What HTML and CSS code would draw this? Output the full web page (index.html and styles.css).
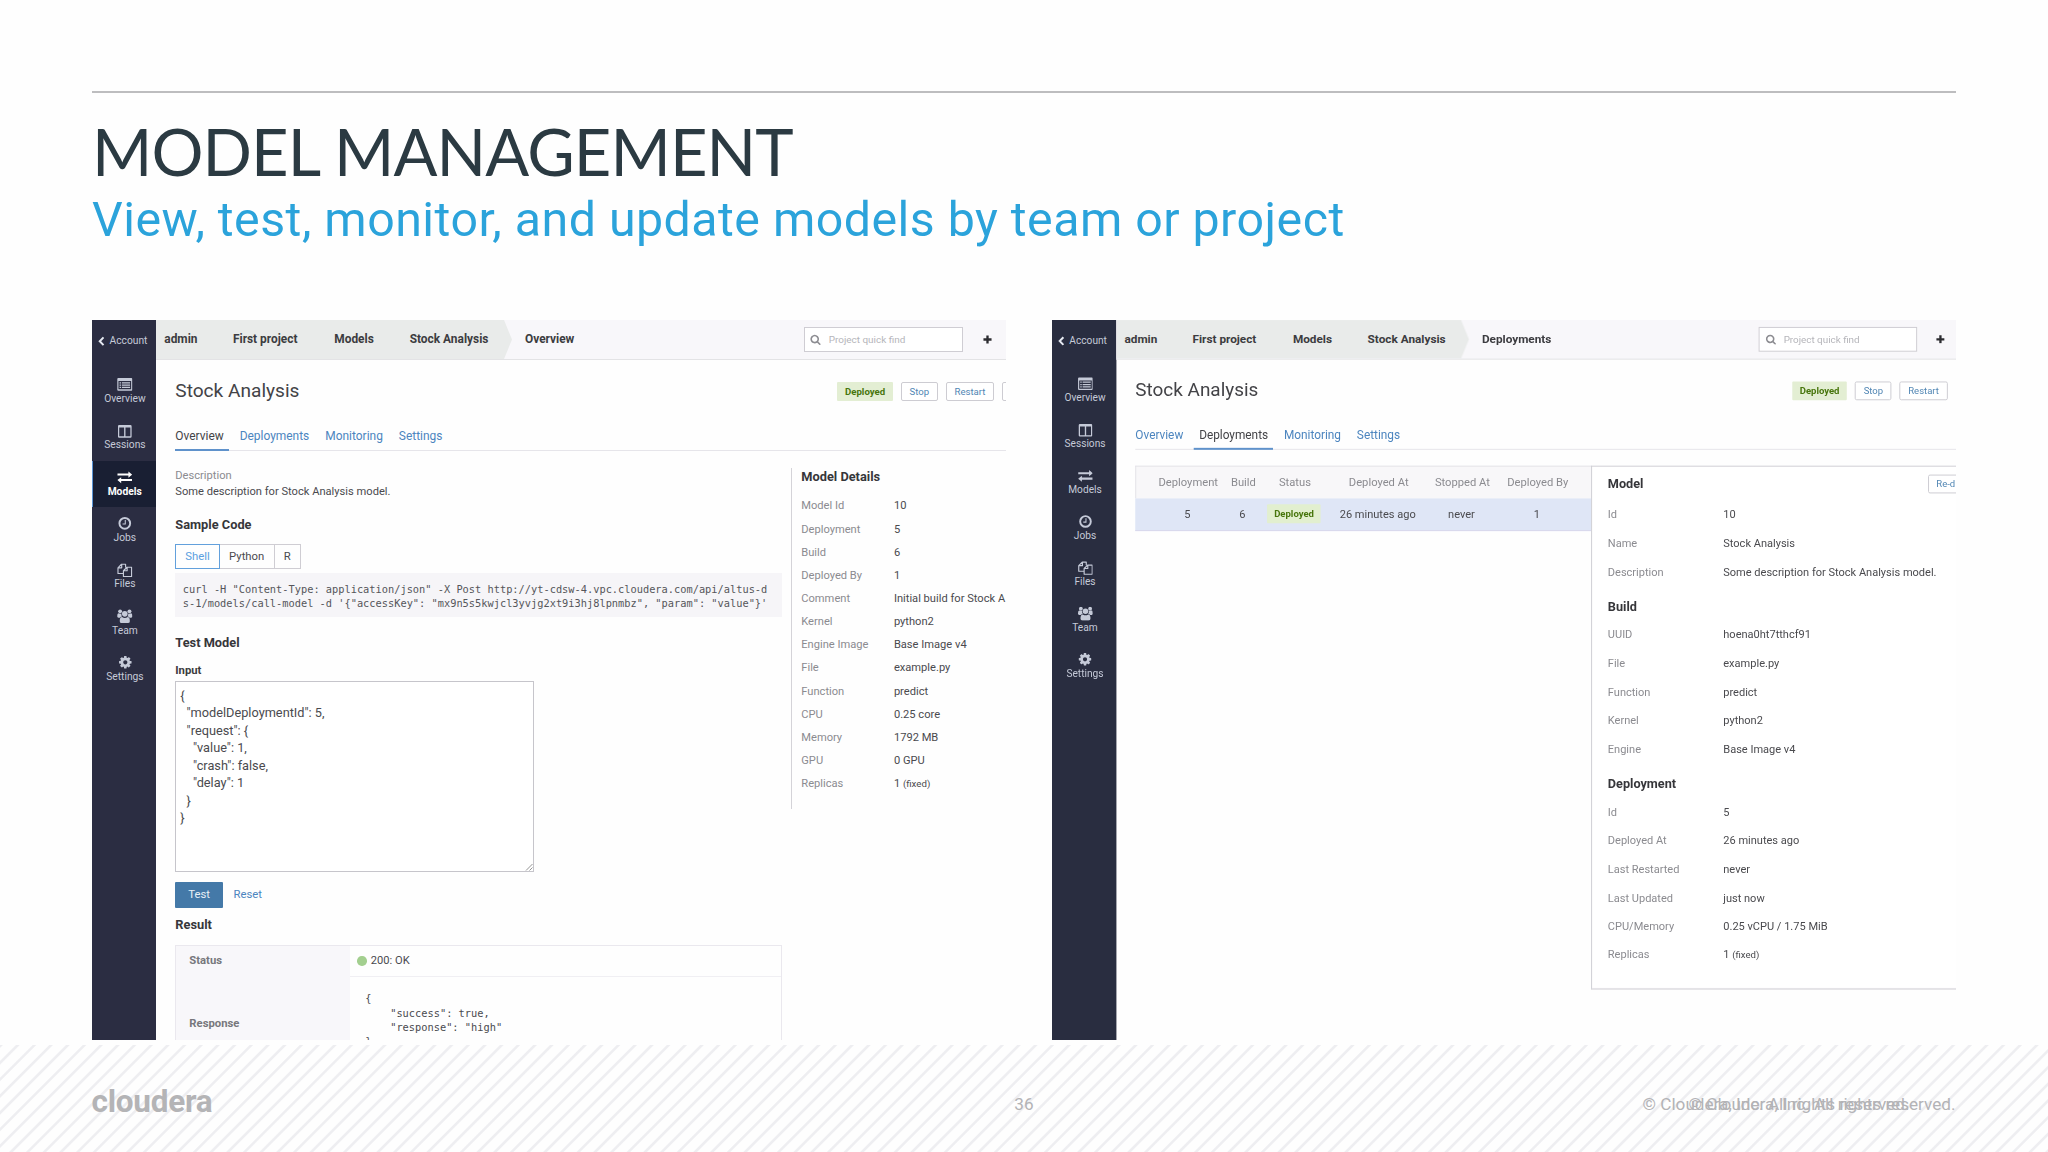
FILE: index.html
```html
<!DOCTYPE html>
<html lang="en">
<head>
<meta charset="utf-8">
<title>Model Management</title>
<link rel="stylesheet" href="styles.css">
</head>
<body>
<svg class="sprite" width="0" height="0" aria-hidden="true">
  <symbol id="i-back" viewBox="0 0 8 11"><path d="M6.3 1.1 2 5.5l4.3 4.4" fill="none" stroke="currentColor" stroke-width="2.3"/></symbol>
  <symbol id="i-overview" viewBox="0 0 16 14"><path fill-rule="evenodd" fill="currentColor" d="M1.3.5h13.4q1 0 1 1v11q0 1-1 1H1.3q-1 0-1-1v-11q0-1 1-1zM1.5 3.7v8.5h13V3.7z"/><path fill="currentColor" d="M2.6 4.8h1.5v1.3H2.6zM5 4.8h8.4v1.3H5zM2.6 7.2h1.5v1.3H2.6zM5 7.2h8.4v1.3H5zM2.6 9.6h1.5v1.3H2.6zM5 9.6h8.4v1.3H5z"/></symbol>
  <symbol id="i-sessions" viewBox="0 0 16 14"><path fill-rule="evenodd" fill="currentColor" d="M2.2.5h11.6q1.2 0 1.2 1.2v10.6q0 1.2-1.2 1.2H2.2Q1 13.5 1 12.3V1.700Q1 .5 2.200.5zM2.300 3v9.200h5V3zM8.700 3v9.200h5V3z"/></symbol>
  <symbol id="i-models" viewBox="0 0 16 14"><path fill="currentColor" d="M.5 3.200h11.200V1l3.900 3.200-3.900 3.200V5.200H.5zM15.500 8.800H4.300V6.900L.4 9.900l3.900 3.200v-2.200h11.200z"/></symbol>
  <symbol id="i-jobs" viewBox="0 0 16 14"><circle cx="8" cy="7" r="5.500" fill="none" stroke="currentColor" stroke-width="2"/><path d="M8.500 3.700v4H5.700" fill="none" stroke="currentColor" stroke-width="1.100"/></symbol>
  <symbol id="i-files" viewBox="0 0 16 15"><path fill="none" stroke="currentColor" stroke-width="1.200" stroke-linejoin="round" d="M6.500 10.800H1V5l3.600-3.700h4.200v3.200M4.800 1.300V5H1M6.600 14V8l3.600-3.600H15V14zM10.400 4.400V8H6.600"/></symbol>
  <symbol id="i-team" viewBox="0 0 16 15"><g fill="currentColor"><circle cx="3.200" cy="2.400" r="2"/><circle cx="12.800" cy="2.400" r="2"/><circle cx="8" cy="5" r="2.900"/><path d="M.2 7.400Q.2 4.300 1.500 4.300q1.500.8 3 .3-.3 2 .8 3.200-1.500.1-2.300 1.100H1.500Q.2 8.900.2 7.400zM15.800 7.400q0-3.100-1.300-3.100-1.500.8-3 .3.300 2-.8 3.200 1.500.1 2.300 1.100h1.500q1.300 0 1.300-1.500zM2.800 12.500Q2.800 8.300 5.200 8.300q1.300 1 2.800 1t2.800-1q2.400 0 2.400 4.200 0 2-2 2H4.800q-2 0-2-2z"/></g></symbol>
  <symbol id="i-settings" viewBox="0 0 1792 1792"><path fill="currentColor" d="M1152 896q0-106-75-181t-181-75-181 75-75 181 75 181 181 75 181-75 75-181zm512-109v222q0 12-8 23t-20 13l-185 28q-19 54-39 91 35 50 107 138 10 12 10 25t-9 23q-27 37-99 108t-94 71q-12 0-26-9l-138-108q-44 23-91 38-16 136-29 186-7 28-36 28h-222q-14 0-24.500-8.500t-11.500-21.500l-28-184q-49-16-90-37l-141 107q-10 9-25 9-14 0-25-11-126-114-165-168-7-10-7-23 0-12 8-23 15-21 51-66.500t54-70.500q-27-50-41-99l-183-27q-13-2-21-12.500t-8-23.500v-222q0-12 8-23t19-13l186-28q14-46 39-92-40-57-107-138-10-12-10-24 0-10 9-23 26-36 98.500-107.500t94.500-71.500q13 0 26 10l138 107q44-23 91-38 16-136 29-186 7-28 36-28h222q14 0 24.500 8.500t11.500 21.500l28 184q49 16 90 37l142-107q9-9 24-9 13 0 25 10 129 119 165 170 7 8 7 22 0 12-8 23-15 21-51 66.500t-54 70.500q26 50 41 98l183 28q13 2 21 12.500t8 23.500z"/></symbol>
  <symbol id="i-search" viewBox="0 0 1792 1792"><path fill="currentColor" d="M1216 832q0-185-131.500-316.500t-316.500-131.500-316.500 131.500-131.500 316.500 131.500 316.500 316.500 131.500 316.500-131.500 131.500-316.500zm512 832q0 52-38 90t-90 38q-54 0-90-38l-343-342q-179 124-399 124-143 0-273.500-55.500t-225-150-150-225-55.500-273.500 55.500-273.500 150-225 225-150 273.500-55.500 273.500 55.500 225 150 150 225 55.500 273.500q0 220-124 399l343 343q37 37 37 90z"/></symbol>
  <symbol id="i-plus" viewBox="0 0 10 10"><path d="M5 .5v9M.5 5h9" stroke="currentColor" stroke-width="2.600"/></symbol>
</svg>

<main class="slide">
  <header class="slide-head">
    <h1>MODEL MANAGEMENT</h1>
    <p>View, test, monitor, and update models by team or project</p>
  </header>

  <div class="shots">
    <section class="shot shot-overview">
      <div class="app">
        <nav class="side">
          <a class="back"><svg><use href="#i-back"/></svg>Account</a>
          <a class="item"><svg><use href="#i-overview"/></svg>Overview</a>
          <a class="item"><svg><use href="#i-sessions"/></svg>Sessions</a>
          <a class="item active"><svg><use href="#i-models"/></svg>Models</a>
          <a class="item"><svg><use href="#i-jobs"/></svg>Jobs</a>
          <a class="item"><svg><use href="#i-files"/></svg>Files</a>
          <a class="item"><svg><use href="#i-team"/></svg>Team</a>
          <a class="item"><svg class="gear"><use href="#i-settings"/></svg>Settings</a>
        </nav>
        <div class="page">
          <div class="topbar">
            <div class="crumbs"><b class="c1">admin</b><b class="c2">First project</b><b class="c3">Models</b><b class="c4">Stock Analysis</b></div>
            <b class="here">Overview</b>
            <div class="search"><svg><use href="#i-search"/></svg>Project quick find</div>
            <svg class="plus"><use href="#i-plus"/></svg>
          </div>
          <div class="content">
            <div class="title-row"><h2>Stock Analysis</h2><span class="badge">Deployed</span><span class="btn">Stop</span><span class="btn">Restart</span><span class="btn more"></span></div>
            <div class="tabs"><a class="on first">Overview</a><a>Deployments</a><a>Monitoring</a><a>Settings</a></div>
            <div class="cols">
              <div class="main-col">
                <div class="muted desc-label">Description</div>
                <div class="desc">Some description for Stock Analysis model.</div>
                <h3 class="h-sample">Sample Code</h3>
                <div class="langs"><span class="sel">Shell</span><span class="py">Python</span><span class="r">R</span></div>
                <pre class="code">curl -H "Content-Type: application/json" -X Post http://yt-cdsw-4.vpc.cloudera.com/api/altus-d
s-1/models/call-model -d '{"accessKey": "mx9n5s5kwjcl3yvjg2xt9i3hj8lpnmbz", "param": "value"}'</pre>
                <h3 class="h-test">Test Model</h3>
                <div class="input-label">Input</div>
                <div class="input">{
  "modelDeploymentId": 5,
  "request": {
    "value": 1,
    "crash": false,
    "delay": 1
  }
}<svg class="grip" viewBox="0 0 8 8"><path d="M1 7.500 7.500 1M4.500 7.500l3-3" stroke="#888" stroke-width=".9"/></svg></div>
                <div class="actions"><span class="test">Test</span><a>Reset</a></div>
                <h3 class="h-result">Result</h3>
                <div class="result">
                  <div class="rk status">Status</div><div class="rv ok"><i class="dot"></i>200: OK</div>
                  <div class="rk response">Response</div><pre class="rv json">{
    "success": true,
    "response": "high"
}</pre>
                </div>
              </div>
              <aside class="details">
                <h3>Model Details</h3>
                <dl>
                  <dt>Model Id</dt><dd>10</dd>
                  <dt>Deployment</dt><dd>5</dd>
                  <dt>Build</dt><dd>6</dd>
                  <dt>Deployed By</dt><dd>1</dd>
                  <dt>Comment</dt><dd>Initial build for Stock A</dd>
                  <dt>Kernel</dt><dd>python2</dd>
                  <dt>Engine Image</dt><dd>Base Image v4</dd>
                  <dt>File</dt><dd>example.py</dd>
                  <dt>Function</dt><dd>predict</dd>
                  <dt>CPU</dt><dd>0.25 core</dd>
                  <dt>Memory</dt><dd>1792 MB</dd>
                  <dt>GPU</dt><dd>0 GPU</dd>
                  <dt>Replicas</dt><dd>1 <small>(fixed)</small></dd>
                </dl>
              </aside>
            </div>
          </div>
        </div>
      </div>
    </section>

    <section class="shot shot-deployments">
      <div class="app">
        <nav class="side">
          <a class="back"><svg><use href="#i-back"/></svg>Account</a>
          <a class="item"><svg><use href="#i-overview"/></svg>Overview</a>
          <a class="item"><svg><use href="#i-sessions"/></svg>Sessions</a>
          <a class="item"><svg><use href="#i-models"/></svg>Models</a>
          <a class="item"><svg><use href="#i-jobs"/></svg>Jobs</a>
          <a class="item"><svg><use href="#i-files"/></svg>Files</a>
          <a class="item"><svg><use href="#i-team"/></svg>Team</a>
          <a class="item"><svg class="gear"><use href="#i-settings"/></svg>Settings</a>
        </nav>
        <div class="page">
          <div class="topbar">
            <div class="crumbs"><b class="c1">admin</b><b class="c2">First project</b><b class="c3">Models</b><b class="c4">Stock Analysis</b></div>
            <b class="here">Deployments</b>
            <div class="search"><svg><use href="#i-search"/></svg>Project quick find</div>
            <svg class="plus"><use href="#i-plus"/></svg>
          </div>
          <div class="content">
            <div class="title-row"><h2>Stock Analysis</h2><span class="badge">Deployed</span><span class="btn">Stop</span><span class="btn">Restart</span></div>
            <div class="tabs"><a class="first">Overview</a><a class="on">Deployments</a><a>Monitoring</a><a>Settings</a></div>
            <div class="cols deploy-cols">
              <div class="grid">
                <div class="grow ghead"><span></span><span>Deployment</span><span>Build</span><span>Status</span><span>Deployed At</span><span>Stopped At</span><span>Deployed By</span></div>
                <div class="grow gsel"><span></span><span>5</span><span>6</span><span><em class="badge">Deployed</em></span><span>26 minutes ago</span><span>never</span><span>1</span></div>
              </div>
              <aside class="drawer">
                <div class="drawer-head"><h3>Model</h3><span class="btn">Re-d</span></div>
                <dl>
                  <dt>Id</dt><dd>10</dd>
                  <dt>Name</dt><dd>Stock Analysis</dd>
                  <dt>Description</dt><dd>Some description for Stock Analysis model.</dd>
                </dl>
                <h3>Build</h3>
                <dl>
                  <dt>UUID</dt><dd>hoena0ht7tthcf91</dd>
                  <dt>File</dt><dd>example.py</dd>
                  <dt>Function</dt><dd>predict</dd>
                  <dt>Kernel</dt><dd>python2</dd>
                  <dt>Engine</dt><dd>Base Image v4</dd>
                </dl>
                <h3>Deployment</h3>
                <dl>
                  <dt>Id</dt><dd>5</dd>
                  <dt>Deployed At</dt><dd>26 minutes ago</dd>
                  <dt>Last Restarted</dt><dd>never</dd>
                  <dt>Last Updated</dt><dd>just now</dd>
                  <dt>CPU/Memory</dt><dd>0.25 vCPU / 1.75 MiB</dd>
                  <dt>Replicas</dt><dd>1 <small>(fixed)</small></dd>
                </dl>
              </aside>
            </div>
          </div>
        </div>
      </div>
    </section>
  </div>

  <footer class="foot">
    <span class="logo">cloudera</span>
    <span class="num">36</span>
    <span class="copy"><span class="copy-under">© Cloudera, Inc. All rights reserved.</span>© Cloudera, Inc. All rights reserved.</span>
  </footer>
</main>
</body>
</html>
```

FILE: styles.css
```css
* { box-sizing: border-box; }
body { margin: 0; background: #fefefe; font-family: Roboto, "Liberation Sans", sans-serif; }
h1, h2, h3, p, pre, dl, dd { margin: 0; }
.sprite { display: block; height: 0; }

.slide { width: 2048px; height: 1152px; overflow: hidden; display: flex; flex-direction: column; }
.slide-head { margin: 91px 92px 0; height: 229px; border-top: 2px solid #bdbdbf; padding-top: 17px; white-space: nowrap; }
.slide-head h1 { font: 400 65px/82px Lato, sans-serif; color: #2b3a42; letter-spacing: -.9px; }
.slide-head p { margin-top: 3px; font-size: 48.300px; letter-spacing: .480px; line-height: 50px; color: #2ba3db; }

.shots { display: flex; gap: 46px; margin: 0 92px; height: 724.700px; flex: none; }
.shot { height: 719.500px; overflow: hidden; flex: none; }
.shot-overview { width: 914px; --page: 850px; --title: 662px; }
.shot-deployments { width: 904.500px; margin-left: -.3px; --page: 852px; --title: 662.700px; }
.shot-deployments .app { transform: scale(.991); transform-origin: 0 0; }
.app { display: flex; height: 727px; width: 916px; font-size: 11.130px; color: #4a4a4e; line-height: 16px; }

/* left navigation */
.side { width: 64px; flex: none; background: #2b2d42; color: #c5cad8; font-size: 10.250px; text-align: center; }
.shot-deployments .side { background: #292d40; width: 64.800px; }
.side svg { display: block; }
.back { display: flex; align-items: center; height: 48.300px; padding: 0 0 6.500px 6px; }
.back svg { width: 7px; height: 10.500px; margin-right: 4.500px; color: #e4e8f0; }
.item { display: block; height: 46.350px; padding: 9.100px 0 0 1.800px; line-height: 14px; }
.item svg { width: 15.600px; height: 14.600px; margin: 0 auto; }
.item svg.gear { width: 14.600px; }
.item.active { background: #191f33; color: #fff; font-weight: 700; border-left: 1.500px solid #5b95d6; padding-left: .3px; }

/* breadcrumb bar */
.page { width: var(--page); flex: none; }
.topbar { display: flex; align-items: center; height: 40px; background: #f8f7fa; border-bottom: 1px solid #e3e3e5; font-size: 11.900px; color: #3c3c40; white-space: nowrap; }
.topbar > * { flex: none; }
.crumbs { display: flex; align-items: center; width: 356px; height: 39px; background: #e9ebea; padding: 0 0 1px 8.300px; clip-path: polygon(0 0, 348px 0, 356px 50%, 348px 100%, 0 100%); }
.c1 { width: 68.700px; flex: none; } .c2 { width: 101.300px; flex: none; } .c3 { width: 75.400px; flex: none; }
.here { width: 291.700px; padding: 0 0 1px 13px; }
.search { display: flex; align-items: center; width: 159.500px; height: 25px; border: 1px solid #cfcdd3; background: #fff; color: #b5b5ba; font-size: 9.950px; padding-left: 5.500px; }
.search svg { width: 11px; height: 11px; margin-right: 7.500px; color: #8d8d92; }
.shot-deployments .here { width: 292.500px; }
.plus { width: 9px; height: 9px; margin-left: 19.500px; color: #2c2c30; }

/* title, badges and tabs */
.content { padding-left: 19.300px; }
.title-row { display: flex; align-items: center; height: 62.600px; white-space: nowrap; }
.title-row h2 { width: var(--title); flex: none; font-weight: 400; font-size: 19.100px; line-height: 24px; color: #434347; padding-top: .4px; }
.badge { display: inline-block; flex: none; background: #e3eed3; color: #48760d; font-size: 9.650px; font-weight: 700; font-style: normal; line-height: 19px; padding: 0 7.700px; border-radius: 1px; }
.btn { flex: none; border: 1px solid #cdccd2; border-radius: 2px; background: #fff; color: #5186b4; font-size: 9.600px; line-height: 17px; height: 19px; padding: 0 7.700px; margin-left: 8px; }
.btn.more { width: 40px; }
.tabs { display: flex; gap: 5.400px; height: 28.200px; border-bottom: 1px solid #e6e5ea; font-size: 11.950px; }
.tabs a { height: 28.200px; line-height: 27.400px; padding: 0 5.300px; color: #4c85bf; }
.tabs .first { padding-left: 0; }
.tabs .on { color: #434347; border-bottom: 2.400px solid #5f92cb; }
.cols { display: flex; align-items: flex-start; }
h3 { font-size: 12.800px; line-height: 18px; color: #36363a; font-weight: 700; }
.muted, dt { color: #8b8b90; }
dl { display: grid; white-space: nowrap; }

/* overview page */
.main-col { width: 606.400px; flex: none; }
.desc-label { margin-top: 17.500px; }
.h-sample { margin-top: 15.900px; }
.langs { display: flex; margin-top: 9.800px; height: 24.700px; font-size: 11.300px; line-height: 23px; text-align: center; }
.langs span { border: 1px solid #cfcdd3; border-left: 0; }
.langs .sel { width: 44.500px; border: 1px solid #62a0dc; color: #5b9fe0; }
.langs .py { width: 54.800px; } .langs .r { width: 26.500px; }
.code, .json { font-family: "DejaVu Sans Mono", "Liberation Mono", monospace; font-size: 10.330px; line-height: 14.300px; }
.code { margin-top: 4.800px; height: 43.500px; background: #f6f5f8; padding: 8.200px 0 0 7.500px; color: #55555a; }
.h-test { margin-top: 17.300px; }
.input-label { margin-top: 10.500px; font-weight: 700; font-size: 11.300px; color: #3c3c40; }
.input { position: relative; margin-top: 2.500px; width: 359px; height: 191.200px; border: 1px solid #c6c5cb; padding: 4.300px 4px; font-size: 12.750px; line-height: 17.550px; white-space: pre; background: #fff; }
.grip { position: absolute; right: 0; bottom: 0; width: 8px; height: 8px; }
.actions { display: flex; align-items: center; margin-top: 9.800px; height: 25.700px; font-size: 11.300px; color: #4c85bf; }
.test { width: 47.700px; line-height: 25.700px; margin-right: 10.500px; background: #4479a8; color: #e8f0f7; text-align: center; border-radius: 1px; }
.h-result { margin-top: 8.300px; }
.result { display: grid; grid-template-columns: 174px 1fr; grid-template-rows: 31px 110px; margin-top: 11px; border: 1px solid #eae8ee; }
.rk { background: #f8f7fa; font-weight: 700; color: #77777c; padding-left: 13px; font-size: 11.300px; }
.status { line-height: 30px; }
.response { padding-top: 38.500px; }
.ok { display: flex; align-items: center; border-bottom: 1px solid #f0eff3; padding-left: 7px; }
.dot { width: 9.500px; height: 9.500px; border-radius: 50%; background: #a3cf8f; margin-right: 4px; }
.json { padding: 14px 0 0 15px; }
.details { border-left: 1px solid #d4d3d8; margin: 16.800px 0 0 9.100px; height: 341px; padding-left: 9.500px; width: 230px; }
.details dl { grid-template-columns: 92.600px 1fr; grid-auto-rows: 23.150px; line-height: 23.150px; margin-top: 8.900px; }
small { font-size: 9.700px; }

/* deployments page */
.grid { width: 460.400px; flex: none; margin-top: 16.500px; }
.grow { display: grid; grid-template-columns: 19.200px 66.400px 45px 59px 110px 59px 93px; height: 32.800px; line-height: 33px; text-align: center; white-space: nowrap; }
.ghead { background: #f8f7f9; border: solid #e4e3e8; border-width: 1px 0 0 1px; color: #8b8b90; font-size: 11.300px; }
.gsel { background: #dfe6f6; border-bottom: 1px solid #d9d8ec; }
.gsel .badge { background: #e2efcf; padding: 0 7px; margin-top: 6.200px; display: block; width: 54px; margin-left: 2.500px; }
.drawer { width: 400px; flex: none; margin-top: 16.500px; height: 528.500px; border: solid #cfced4; border-width: 1px 0 2px 1px; border-bottom-color: #e4e3e7; padding-left: 15.400px; background: #fff; }
.drawer-head { display: flex; align-items: center; height: 34.800px; }
.drawer-head h3 { width: 314.800px; }
.drawer dl { grid-template-columns: 116.500px 1fr; grid-auto-rows: 28.850px; line-height: 28.850px; }
.drawer h3 + dl { margin-top: 5.800px; }
.drawer-head + dl { margin-top: .2px; }
.drawer dl + h3 { margin-top: 10.800px; }

/* slide footer */
.foot { position: relative; flex: 1; display: flex; justify-content: center; background: repeating-linear-gradient(135deg, #eeeef1 0 1.600px, #fefefe 2.600px 10.800px, #eeeef1 11.800px); color: #b3b3b6; font-size: 17.150px; line-height: 20px; }
.logo { position: absolute; left: 91.500px; top: 41.500px; font-size: 31.500px; line-height: 32px; font-weight: 700; letter-spacing: -.250px; color: #b4b4b6; }
.num { margin-top: 49.500px; }
.copy { position: absolute; right: 92.500px; top: 49.500px; white-space: nowrap; }
.copy-under { position: absolute; right: 46px; top: 0; }
```
